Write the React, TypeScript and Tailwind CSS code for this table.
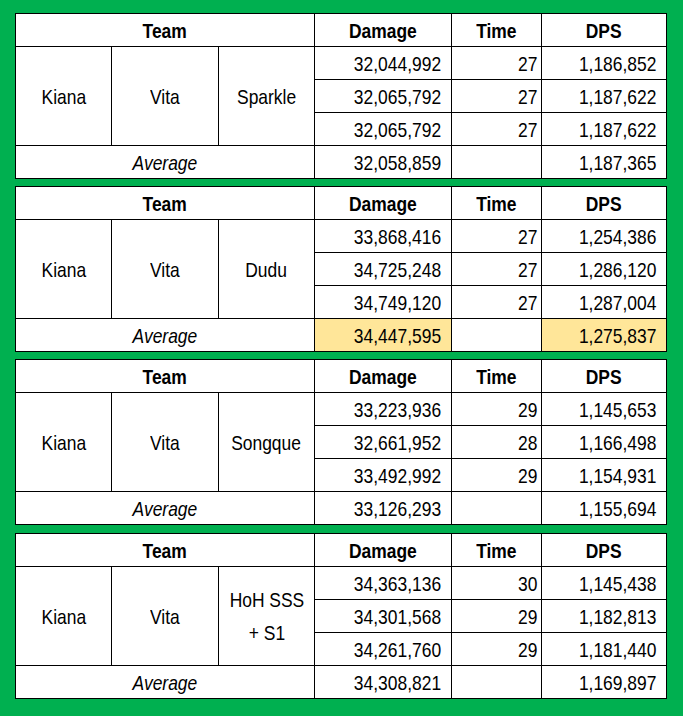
type Row = { damage: string; time: string; dps: string };

type TeamBlock = {
  members: [string, string, string];
  rows: Row[];
  avgDamage: string;
  avgDps: string;
  highlight?: boolean;
};

const blocks: TeamBlock[] = [
  {
    members: ["Kiana", "Vita", "Sparkle"],
    rows: [
      { damage: "32,044,992", time: "27", dps: "1,186,852" },
      { damage: "32,065,792", time: "27", dps: "1,187,622" },
      { damage: "32,065,792", time: "27", dps: "1,187,622" },
    ],
    avgDamage: "32,058,859",
    avgDps: "1,187,365",
  },
  {
    members: ["Kiana", "Vita", "Dudu"],
    rows: [
      { damage: "33,868,416", time: "27", dps: "1,254,386" },
      { damage: "34,725,248", time: "27", dps: "1,286,120" },
      { damage: "34,749,120", time: "27", dps: "1,287,004" },
    ],
    avgDamage: "34,447,595",
    avgDps: "1,275,837",
    highlight: true,
  },
  {
    members: ["Kiana", "Vita", "Songque"],
    rows: [
      { damage: "33,223,936", time: "29", dps: "1,145,653" },
      { damage: "32,661,952", time: "28", dps: "1,166,498" },
      { damage: "33,492,992", time: "29", dps: "1,154,931" },
    ],
    avgDamage: "33,126,293",
    avgDps: "1,155,694",
  },
  {
    members: ["Kiana", "Vita", "HoH SSS\n+ S1"],
    rows: [
      { damage: "34,363,136", time: "30", dps: "1,145,438" },
      { damage: "34,301,568", time: "29", dps: "1,182,813" },
      { damage: "34,261,760", time: "29", dps: "1,181,440" },
    ],
    avgDamage: "34,308,821",
    avgDps: "1,169,897",
  },
];

// no narrow font installed, so squeeze Liberation Sans to Arial Narrow widths
function Narrow({ children, right }: { children: React.ReactNode; right?: boolean }) {
  return (
    <span
      className={`inline-block whitespace-pre-line text-center scale-x-[0.83] ${
        right ? "origin-right" : "origin-center"
      }`}
    >
      {children}
    </span>
  );
}

const cell = "bg-white flex items-center";

function ResultTable({ block }: { block: TeamBlock }) {
  const hl = block.highlight ? "bg-[#ffe699]" : "bg-white";
  return (
    <div className="grid grid-cols-[95px_106px_95px_136px_89px_124px] grid-rows-[repeat(5,32px)] gap-px bg-black p-px w-[652px]">
      {/* header */}
      <div className={`${cell} col-span-3 justify-center font-bold`}><Narrow>Team</Narrow></div>
      <div className={`${cell} justify-center font-bold`}><Narrow>Damage</Narrow></div>
      <div className={`${cell} justify-center font-bold`}><Narrow>Time</Narrow></div>
      <div className={`${cell} justify-center font-bold`}><Narrow>DPS</Narrow></div>

      {/* merged team cells */}
      {block.members.map((m, i) => (
        <div
          key={i}
          className={`${cell} row-span-3 justify-center row-start-2 leading-[33px]`}
          style={{ gridColumnStart: i + 1 }}
        >
          <Narrow>{m}</Narrow>
        </div>
      ))}

      {block.rows.map((r, i) => (
        <div key={i} className="contents">
          <div className={`${cell} justify-end pr-[10px]`}><Narrow right>{r.damage}</Narrow></div>
          <div className={`${cell} justify-end pr-[4px]`}><Narrow right>{r.time}</Narrow></div>
          <div className={`${cell} justify-end pr-[10px]`}><Narrow right>{r.dps}</Narrow></div>
        </div>
      ))}

      {/* average */}
      <div className={`${cell} col-span-3 justify-center italic`}><Narrow>Average</Narrow></div>
      <div className={`flex items-center justify-end pr-[10px] ${hl}`}><Narrow right>{block.avgDamage}</Narrow></div>
      <div className={cell}></div>
      <div className={`flex items-center justify-end pr-[10px] ${hl}`}><Narrow right>{block.avgDps}</Narrow></div>
    </div>
  );
}

export default function App() {
  return (
    <div
      className="w-[683px] h-[716px] bg-[#00b050] pt-[13px] pl-[15px] flex flex-col gap-[7px] text-[21px] text-black leading-none"
      style={{ fontFamily: '"Liberation Sans", Arial, sans-serif' }}
    >
      {blocks.map((b, i) => (
        <div key={i} className={i === 3 ? "mt-px" : ""}>
          <ResultTable block={b} />
        </div>
      ))}
    </div>
  );
}
